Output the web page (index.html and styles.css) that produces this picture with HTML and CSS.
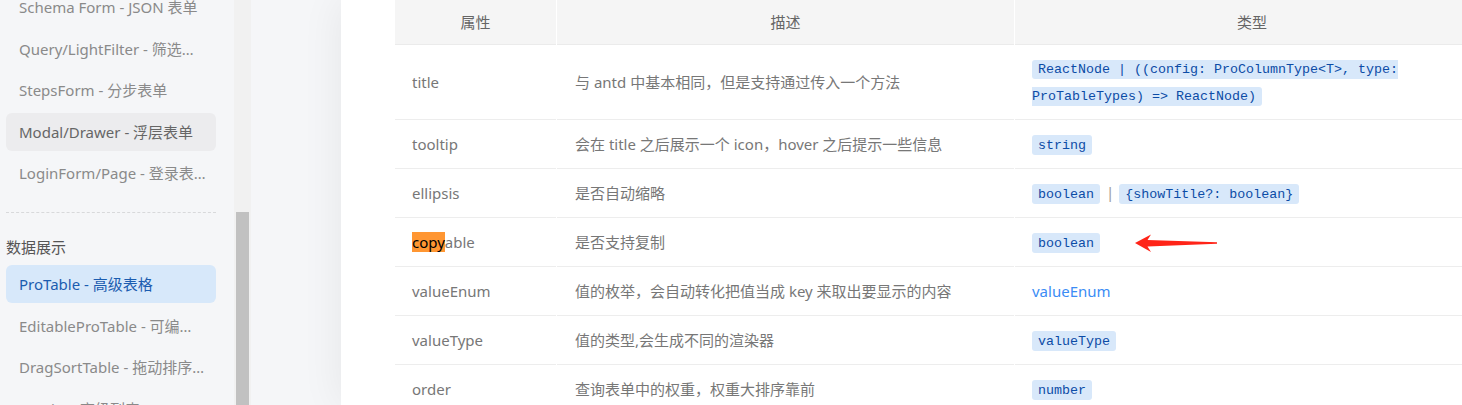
FILE: index.html
```html
<!DOCTYPE html>
<html lang="zh-CN">
<head>
<meta charset="utf-8">
<title>ProTable - 高级表格</title>
<link rel="stylesheet" href="styles.css">
</head>
<body>
<div class="page">
  <aside class="sidebar">
    <nav class="menu">
      <ul class="menu-list">
        <li class="menu-item">Schema Form - JSON 表单</li>
        <li class="menu-item">Query/LightFilter - 筛选表单</li>
        <li class="menu-item">StepsForm - 分步表单</li>
        <li class="menu-item is-hover">Modal/Drawer - 浮层表单</li>
        <li class="menu-item">LoginForm/Page - 登录表单</li>
      </ul>
      <div class="menu-divider"></div>
      <div class="menu-group-title">数据展示</div>
      <ul class="menu-list">
        <li class="menu-item is-active">ProTable - 高级表格</li>
        <li class="menu-item">EditableProTable - 可编辑表格</li>
        <li class="menu-item">DragSortTable - 拖动排序表格</li>
        <li class="menu-item">ProList - 高级列表</li>
      </ul>
    </nav>
    <div class="scroll-track"><div class="scroll-thumb"></div></div>
  </aside>

  <main class="content">
    <table class="api-table">
      <colgroup>
        <col class="col-attr">
        <col class="col-desc">
        <col class="col-type">
      </colgroup>
      <thead>
        <tr>
          <th>属性</th>
          <th>描述</th>
          <th>类型</th>
        </tr>
      </thead>
      <tbody>
        <tr class="row-tall">
          <td>title</td>
          <td>与 antd 中基本相同，但是支持通过传入一个方法</td>
          <td class="type-multi"><code class="tag">ReactNode | ((config: ProColumnType&lt;T&gt;, type: ProTableTypes) =&gt; ReactNode)</code></td>
        </tr>
        <tr>
          <td>tooltip</td>
          <td>会在 title 之后展示一个 icon，hover 之后提示一些信息</td>
          <td><code class="tag">string</code></td>
        </tr>
        <tr>
          <td>ellipsis</td>
          <td>是否自动缩略</td>
          <td><code class="tag">boolean</code><span class="pipe">|</span><code class="tag">{showTitle?: boolean}</code></td>
        </tr>
        <tr>
          <td><mark class="find-hit">copy</mark>able</td>
          <td>是否支持复制</td>
          <td class="type-arrow"><code class="tag">boolean</code>
            <svg class="arrow" width="92" height="26" viewBox="0 0 92 26" aria-hidden="true">
              <path d="M5 13 L21 4.5 L17.5 10 L87 12.3 L87 13.7 L17.5 16.5 L21 22 Z" fill="#ff2418"/>
            </svg>
          </td>
        </tr>
        <tr>
          <td>valueEnum</td>
          <td>值的枚举，会自动转化把值当成 key 来取出要显示的内容</td>
          <td><a class="type-link" href="#valueEnum">valueEnum</a></td>
        </tr>
        <tr>
          <td>valueType</td>
          <td>值的类型,会生成不同的渲染器</td>
          <td><code class="tag">valueType</code></td>
        </tr>
        <tr>
          <td>order</td>
          <td>查询表单中的权重，权重大排序靠前</td>
          <td><code class="tag">number</code></td>
        </tr>
      </tbody>
    </table>
  </main>
</div>
</body>
</html>
```

FILE: styles.css
```css
* {
  box-sizing: border-box;
}

html, body {
  margin: 0;
  padding: 0;
}

body {
  width: 1462px;
  height: 405px;
  overflow: hidden;
  background: #f5f6f8;
  font-family: "Noto Sans", "Noto Sans CJK SC", sans-serif;
  font-size: 15px;
}

.page {
  display: flex;
  height: 405px;
  overflow: hidden;
}

/* ---------- sidebar ---------- */
.sidebar {
  flex: 0 0 251px;
  min-width: 0;
  display: flex;
  height: 405px;
  overflow: hidden;
  background: #f5f6f8;
}

.menu {
  flex: 0 0 234px;
  width: 234px;
  min-width: 0;
  overflow: hidden;
  padding: 0 18px 0 6px;
  margin-top: -12px;
}

.menu-list {
  list-style: none;
  margin: 0;
  padding: 0;
  display: flex;
  flex-direction: column;
  gap: 3.5px;
}

.menu-item {
  height: 38px;
  line-height: 38px;
  padding: 0 10px 0 13px;
  border-radius: 6px;
  color: #8a8a8a;
  white-space: nowrap;
  overflow: hidden;
  text-overflow: ellipsis;
}

.menu-item.is-hover {
  background: #ececee;
  color: #666;
}

.menu-item.is-active {
  background: #d7e8fa;
  color: #1b5cb0;
}

.menu-divider {
  margin-top: 20px;
  border-top: 1px dashed #d8d9db;
}

.menu-group-title {
  margin-top: 22px;
  margin-bottom: 6px;
  line-height: 24px;
  color: #555;
}

.scroll-track {
  flex: 0 0 17px;
  display: flex;
  flex-direction: column;
  background: #f1f1f1;
  padding: 0 2px;
}

.scroll-thumb {
  margin-top: 212px;
  flex: 1;
  background: #c1c1c1;
}

/* ---------- content ---------- */
.content {
  flex: 1;
  min-width: 0;
  margin-left: 90px;
  padding-left: 53px;
  background: #fff;
  box-shadow: 0 0 40px rgba(0, 0, 0, 0.07);
  overflow: hidden;
}

.api-table {
  table-layout: fixed;
  width: 1096px;
  border-collapse: separate;
  border-spacing: 1px 0;
  color: #777;
}

.col-attr { width: 161px; }
.col-desc { width: 457px; }
.col-type { width: 474px; }

.api-table th {
  height: 45px;
  padding: 0 17px 2px;
  background: #f5f5f5;
  border-bottom: 1px solid #ebebeb;
  font-weight: normal;
  color: #666;
  text-align: center;
  vertical-align: middle;
}

.api-table td {
  height: 49px;
  padding: 0 17px;
  line-height: 24px;
  border-bottom: 1px solid #ededed;
  vertical-align: middle;
  text-align: left;
}

.api-table .row-tall td {
  height: 75px;
}

.api-table td:nth-child(2) {
  padding-left: 18px;
}

.api-table .type-multi {
  line-height: 25px;
}

.tag {
  font-family: "Liberation Mono", monospace;
  font-size: 13.33px;
  color: #0c4ca6;
  background: #d8e8fa;
  border-radius: 3px;
  padding: 2.5px 6px;
}

.type-multi .tag {
  padding: 2px 6px;
}

.pipe {
  display: inline-block;
  margin: 0 5px 0 6px;
  color: #9a9a9a;
}

.find-hit {
  background: #ff9632;
  color: #000;
}

.type-link {
  color: #3b8cf5;
  text-decoration: none;
}

.type-arrow {
  position: relative;
}

.arrow {
  position: absolute;
  left: 115px;
  top: 12px;
}
```
